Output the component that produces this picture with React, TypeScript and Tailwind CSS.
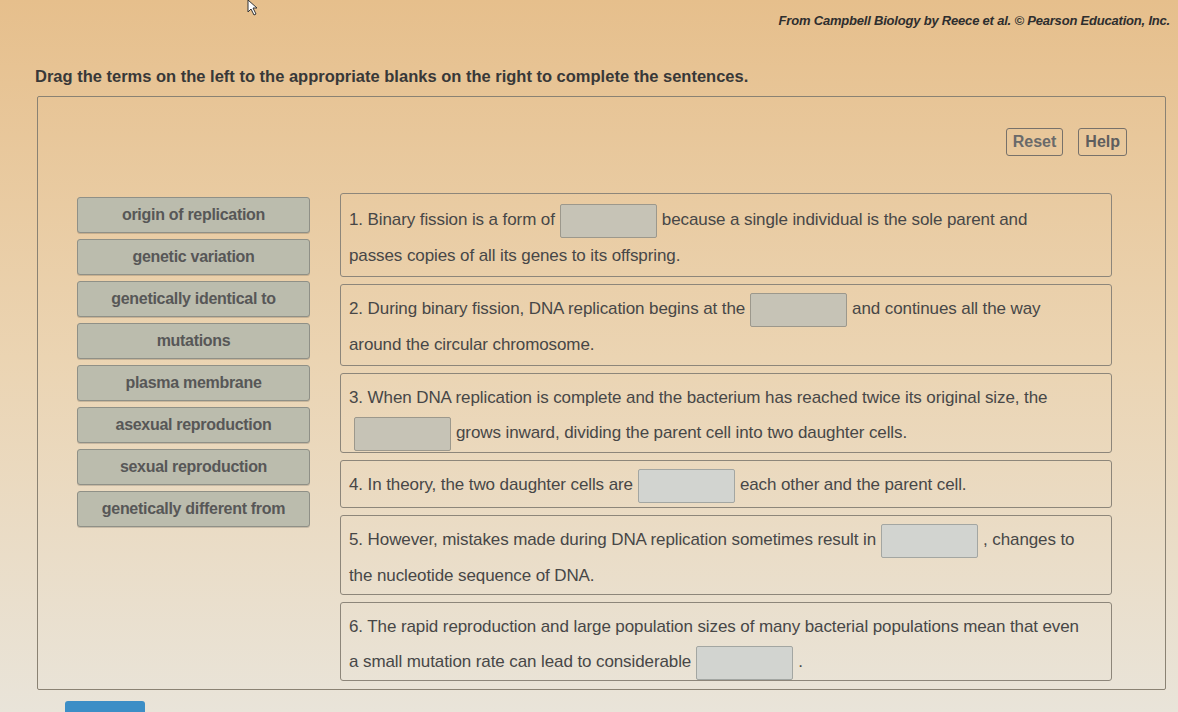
import React from "react";

const terms = [
  "origin of replication",
  "genetic variation",
  "genetically identical to",
  "mutations",
  "plasma membrane",
  "asexual reproduction",
  "sexual reproduction",
  "genetically different from",
];

function Blank({ light }: { light?: boolean }) {
  return (
    <span
      className={
        "inline-block align-middle w-[97px] h-[34px] mx-[5px] rounded-[2px] border " +
        (light ? "border-[#a3a6a2] bg-[#d2d4d0]" : "border-[#9c988c] bg-[#c6c3b6]")
      }
    />
  );
}

function Box({ children, h }: { children: React.ReactNode; h: string }) {
  return (
    <div
      className={
        "rounded-[3px] border border-[#8d867a] px-2 pt-[6px] leading-[35px] text-[17px] tracking-[-0.1px] text-[#474747] " +
        h
      }
    >
      {children}
    </div>
  );
}

export default function App() {
  return (
    <div
      className="relative w-[1178px] h-[712px] overflow-hidden bg-linear-to-b from-[#e6bf8c] via-[#ebd4b2] to-[#e9e4d9]"
      style={{ fontFamily: '"Liberation Sans", Arial, sans-serif' }}
    >
      <svg className="absolute left-[246px] top-0" width="14" height="16" viewBox="0 0 14 16">
        <path d="M2 0 L2 12 L5 9 L8 15 L10 14 L7 8 L11 8 Z" fill="#fff" stroke="#333" strokeWidth="1" />
      </svg>
      <div className="flex justify-end pr-[8px] pt-[11px]">
        <span className="text-[13px] font-bold italic text-[#2e2e2e] tracking-[-0.2px]">
          From Campbell Biology by Reece et al. © Pearson Education, Inc.
        </span>
      </div>
      <div className="pl-[35px] pt-[33px] text-[16.5px] font-bold text-[#383838]">
        Drag the terms on the left to the appropriate blanks on the right to complete the sentences.
      </div>
      <div className="ml-[37px] mr-[12px] mt-[8px] h-[594px] border border-[#8a8273] rounded-[2px]">
        <div className="flex justify-end gap-[15px] pr-[38px] pt-[31px]">
          <button className="h-[28px] px-[6px] border-[1.5px] border-[#77716a] rounded-[3px] text-[16px] font-bold text-[#6a6a6a]">
            Reset
          </button>
          <button className="h-[28px] px-[6px] border-[1.5px] border-[#77716a] rounded-[3px] text-[16px] font-bold text-[#5e5e5e]">
            Help
          </button>
        </div>
        <div className="flex mt-[37px]">
          <div className="ml-[39px] mt-[4px] w-[233px] flex flex-col gap-[6px]">
            {terms.map((t) => (
              <div
                key={t}
                className="h-[36px] flex items-center justify-center rounded-[3px] border border-[#8f9087] bg-[#bbbcad] text-[16px] font-bold tracking-[-0.3px] text-[#575757] shadow-[0_1px_0_rgba(0,0,0,0.15)]"
              >
                {t}
              </div>
            ))}
          </div>
          <div className="ml-[30px] w-[772px] flex flex-col gap-[7px]">
            <Box h="h-[84px] pt-[8px]">
              1. Binary fission is a form of
              <Blank />
              because a single individual is the sole parent and
              <br />
              passes copies of all its genes to its offspring.
            </Box>
            <Box h="h-[82px]">
              2. During binary fission, DNA replication begins at the
              <Blank />
              and continues all the way
              <br />
              around the circular chromosome.
            </Box>
            <Box h="h-[80px]">
              3. When DNA replication is complete and the bacterium has reached twice its original size, the
              <br />
              <Blank />
              grows inward, dividing the parent cell into two daughter cells.
            </Box>
            <Box h="h-[48px]">
              4. In theory, the two daughter cells are
              <Blank light />
              each other and the parent cell.
            </Box>
            <Box h="h-[80px]">
              5. However, mistakes made during DNA replication sometimes result in
              <Blank light />
              , changes to
              <br />
              the nucleotide sequence of DNA.
            </Box>
            <Box h="h-[79px]">
              6. The rapid reproduction and large population sizes of many bacterial populations mean that even
              <br />
              a small mutation rate can lead to considerable
              <Blank light />.
            </Box>
          </div>
        </div>
      </div>
      <div className="ml-[65px] mt-[11px] w-[80px] h-[20px] rounded-t-[3px] bg-[#3c8ec6]" />
    </div>
  );
}
